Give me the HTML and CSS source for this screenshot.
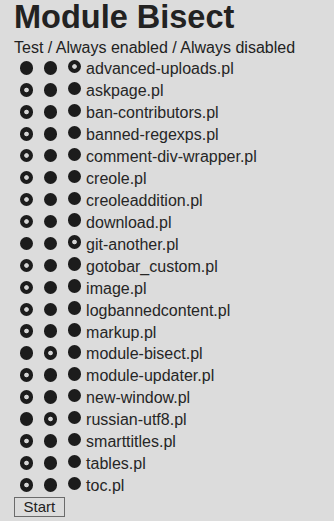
FILE: index.html
```html
<!DOCTYPE html>
<html lang="en">
<head>
<meta charset="utf-8">
<title>Module Bisect</title>
<link rel="stylesheet" href="styles.css">
</head>
<body>
<h1 class="title">Module Bisect</h1>
<p class="legend">Test / Always enabled / Always disabled</p>
<form class="bisect">
  <div class="row"><input class="r r1" type="radio" name="m1"><input class="r r2" type="radio" name="m1"><input class="r r3" type="radio" name="m1" checked><span class="name">advanced-uploads.pl</span></div>
  <div class="row"><input class="r r1" type="radio" name="m2" checked><input class="r r2" type="radio" name="m2"><input class="r r3" type="radio" name="m2"><span class="name">askpage.pl</span></div>
  <div class="row"><input class="r r1" type="radio" name="m3" checked><input class="r r2" type="radio" name="m3"><input class="r r3" type="radio" name="m3"><span class="name">ban-contributors.pl</span></div>
  <div class="row"><input class="r r1" type="radio" name="m4" checked><input class="r r2" type="radio" name="m4"><input class="r r3" type="radio" name="m4"><span class="name">banned-regexps.pl</span></div>
  <div class="row"><input class="r r1" type="radio" name="m5" checked><input class="r r2" type="radio" name="m5"><input class="r r3" type="radio" name="m5"><span class="name">comment-div-wrapper.pl</span></div>
  <div class="row"><input class="r r1" type="radio" name="m6" checked><input class="r r2" type="radio" name="m6"><input class="r r3" type="radio" name="m6"><span class="name">creole.pl</span></div>
  <div class="row"><input class="r r1" type="radio" name="m7" checked><input class="r r2" type="radio" name="m7"><input class="r r3" type="radio" name="m7"><span class="name">creoleaddition.pl</span></div>
  <div class="row"><input class="r r1" type="radio" name="m8" checked><input class="r r2" type="radio" name="m8"><input class="r r3" type="radio" name="m8"><span class="name">download.pl</span></div>
  <div class="row"><input class="r r1" type="radio" name="m9"><input class="r r2" type="radio" name="m9"><input class="r r3" type="radio" name="m9" checked><span class="name">git-another.pl</span></div>
  <div class="row"><input class="r r1" type="radio" name="m10" checked><input class="r r2" type="radio" name="m10"><input class="r r3" type="radio" name="m10"><span class="name">gotobar_custom.pl</span></div>
  <div class="row"><input class="r r1" type="radio" name="m11" checked><input class="r r2" type="radio" name="m11"><input class="r r3" type="radio" name="m11"><span class="name">image.pl</span></div>
  <div class="row"><input class="r r1" type="radio" name="m12" checked><input class="r r2" type="radio" name="m12"><input class="r r3" type="radio" name="m12"><span class="name">logbannedcontent.pl</span></div>
  <div class="row"><input class="r r1" type="radio" name="m13" checked><input class="r r2" type="radio" name="m13"><input class="r r3" type="radio" name="m13"><span class="name">markup.pl</span></div>
  <div class="row"><input class="r r1" type="radio" name="m14"><input class="r r2" type="radio" name="m14" checked><input class="r r3" type="radio" name="m14"><span class="name">module-bisect.pl</span></div>
  <div class="row"><input class="r r1" type="radio" name="m15" checked><input class="r r2" type="radio" name="m15"><input class="r r3" type="radio" name="m15"><span class="name">module-updater.pl</span></div>
  <div class="row"><input class="r r1" type="radio" name="m16" checked><input class="r r2" type="radio" name="m16"><input class="r r3" type="radio" name="m16"><span class="name">new-window.pl</span></div>
  <div class="row"><input class="r r1" type="radio" name="m17"><input class="r r2" type="radio" name="m17" checked><input class="r r3" type="radio" name="m17"><span class="name">russian-utf8.pl</span></div>
  <div class="row"><input class="r r1" type="radio" name="m18" checked><input class="r r2" type="radio" name="m18"><input class="r r3" type="radio" name="m18"><span class="name">smarttitles.pl</span></div>
  <div class="row"><input class="r r1" type="radio" name="m19" checked><input class="r r2" type="radio" name="m19"><input class="r r3" type="radio" name="m19"><span class="name">tables.pl</span></div>
  <div class="row"><input class="r r1" type="radio" name="m20" checked><input class="r r2" type="radio" name="m20"><input class="r r3" type="radio" name="m20"><span class="name">toc.pl</span></div>
  <button class="start" type="button">Start</button>
</form>
</body>
</html>
```

FILE: styles.css
```css
html, body {
  background: #dcdcdc;
}

body {
  margin: 0;
  padding: 0 0 0 14px;
  font-family: "Liberation Sans", Arial, sans-serif;
  color: #222;
}

.title {
  margin: 0;
  font-size: 32.5px;
  font-weight: bold;
  line-height: 34px;
  color: #222;
}

.legend {
  margin: 3.3px 0 0;
  font-size: 16px;
  line-height: 21px;
}

.bisect {
  margin: 0;
}

.row {
  display: flex;
  align-items: flex-start;
  height: 21.94px;
  line-height: 21.94px;
  font-size: 16px;
}

.r {
  -webkit-appearance: none;
  appearance: none;
  flex: none;
  width: 13.5px;
  height: 13.5px;
  margin: 2.9px 0 0 0;
  padding: 0;
  border: 0;
  border-radius: 50%;
  background: #1c1c1c;
  outline: none;
}

.r:checked {
  background: radial-gradient(circle, #d4d4d4 0, #d4d4d4 1.9px, #1c1c1c 2.7px);
}

.r1 {
  margin-left: 5.6px;
}

.r2 {
  margin-left: 10.5px;
}

.r3 {
  margin-left: 10.5px;
  margin-top: 1.6px;
}

.name {
  margin-left: 5px;
  color: #262626;
}

.start {
  display: block;
  box-sizing: border-box;
  height: 20px;
  margin: 0;
  padding: 0 8.5px;
  border: 1px solid #6b6b6b;
  border-radius: 0;
  background: #dcdcdc;
  font-family: "Liberation Sans", Arial, sans-serif;
  font-size: 15px;
  line-height: 18px;
  color: #222;
}
```
